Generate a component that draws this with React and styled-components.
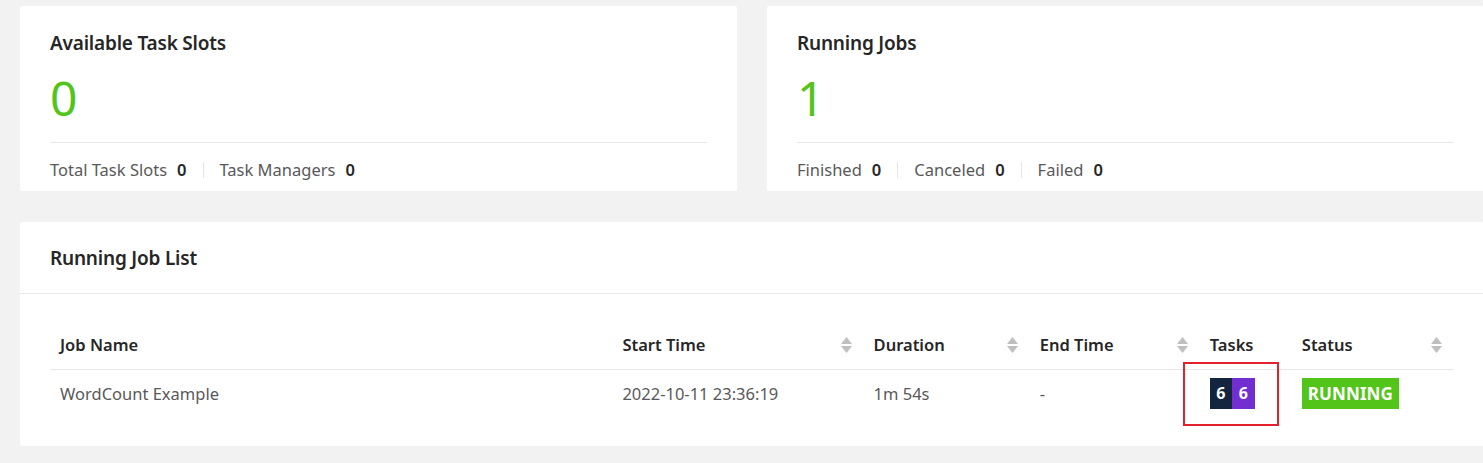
import React from 'react'
import styled, { createGlobalStyle } from 'styled-components'

const GlobalStyle = createGlobalStyle`
  html, body {
    margin: 0;
    padding: 0;
    background: #f2f2f2;
    overflow: hidden;
    font-family: 'Noto Sans', 'Open Sans', sans-serif;
    color: #333;
  }
`

const Page = styled.div`
  width: 1464px;
  padding: 6px 0 0 20px;
  display: flex;
  flex-direction: column;
  gap: 31px;
`

const TopRow = styled.div`
  display: grid;
  grid-template-columns: 717px 717px;
  gap: 30px;
`

const Card = styled.div`
  background: #fff;
  border-radius: 2px;
`

const StatBody = styled.div`
  padding: 24px 30px 0 30px;
`

const StatTitle = styled.div`
  font-size: 19px;
  font-weight: 600;
  line-height: 26px;
  color: #262626;
  letter-spacing: -0.2px;
`

const StatValue = styled.div`
  font-size: 48px;
  line-height: 60px;
  color: #52c41a;
  margin-top: 12px;
  padding-bottom: 14px;
  border-bottom: 1px solid #e8e8e8;
`

const StatFooter = styled.div`
  display: flex;
  align-items: center;
  padding: 16px 0 10px;
  line-height: 22px;
  font-size: 16.5px;
  color: #595959;
`

const FooterItem = styled.span`
  display: inline-flex;
  align-items: center;
`

const FooterValue = styled.span`
  font-weight: 600;
  color: #262626;
  margin-left: 10px;
`

const Sep = styled.span`
  width: 1px;
  height: 16px;
  background: #e4e4e4;
  margin: 0 16px;
`

const ListHeader = styled.div`
  padding: 22px 30px 21px;
  font-size: 19px;
  font-weight: 600;
  line-height: 28px;
  color: #262626;
  border-bottom: 1px solid #e8e8e8;
  letter-spacing: -0.2px;
`

const ListBody = styled.div`
  padding: 27px 30px 29px;
`

const Table = styled.table`
  width: 100%;
  border-collapse: collapse;
  table-layout: fixed;
  font-size: 16.5px;
`

const Th = styled.th`
  text-align: left;
  font-weight: 600;
  color: #262626;
  height: 48px;
  padding: 0 10px;
  border-bottom: 1px solid #e8e8e8;
  box-sizing: border-box;
`

const ThInner = styled.div`
  display: flex;
  align-items: center;
  justify-content: space-between;
`

const Td = styled.td`
  height: 48px;
  padding: 0 10px;
  color: #595959;
  box-sizing: border-box;
`

const Sorter = styled.span`
  display: inline-flex;
  flex-direction: column;
  gap: 2px;
  margin-right: 2px;
  color: #bfbfbf;
`

const TaskWrap = styled.div`
  position: relative;
  display: inline-flex;
`

const TaskBadge = styled.span`
  display: inline-flex;
  align-items: center;
  justify-content: center;
  width: ${p => p.w}px;
  height: 31px;
  background: ${p => p.bg};
  color: #fff;
  font-weight: 700;
  font-size: 16px;
`

const Highlight = styled.div`
  position: absolute;
  left: -27px;
  top: -16px;
  width: 96px;
  height: 64px;
  border: 2px solid #e3202c;
  box-sizing: border-box;
  pointer-events: none;
`

const StatusTag = styled.span`
  display: inline-flex;
  align-items: center;
  height: 31px;
  padding: 0 6px;
  background: #52c41a;
  color: #fff;
  font-weight: 700;
  font-size: 17px;
  letter-spacing: 0.1px;
`

const SortIcon = () => (
  <Sorter>
    <svg width="11" height="7" viewBox="0 0 11 7">
      <path d="M5.5 0 L11 7 L0 7 Z" fill="currentColor" />
    </svg>
    <svg width="11" height="7" viewBox="0 0 11 7">
      <path d="M0 0 L11 0 L5.5 7 Z" fill="currentColor" />
    </svg>
  </Sorter>
)

const StatCard = ({ title, value, items }) => (
  <Card>
    <StatBody>
      <StatTitle>{title}</StatTitle>
      <StatValue>{value}</StatValue>
      <StatFooter>
        {items.map((it, i) => (
          <React.Fragment key={it.label}>
            {i > 0 && <Sep />}
            <FooterItem>
              {it.label}
              <FooterValue>{it.value}</FooterValue>
            </FooterItem>
          </React.Fragment>
        ))}
      </StatFooter>
    </StatBody>
  </Card>
)

const columns = [
  { title: 'Job Name', width: 562 },
  { title: 'Start Time', width: 251, sort: true },
  { title: 'Duration', width: 166, sort: true },
  { title: 'End Time', width: 170, sort: true },
  { title: 'Tasks', width: 92 },
  { title: 'Status', width: 162, sort: true },
]

const App = () => (
  <>
    <GlobalStyle />
    <Page>
      <TopRow>
        <StatCard
          title="Available Task Slots"
          value="0"
          items={[
            { label: 'Total Task Slots', value: 0 },
            { label: 'Task Managers', value: 0 },
          ]}
        />
        <StatCard
          title="Running Jobs"
          value="1"
          items={[
            { label: 'Finished', value: 0 },
            { label: 'Canceled', value: 0 },
            { label: 'Failed', value: 0 },
          ]}
        />
      </TopRow>
      <Card>
        <ListHeader>Running Job List</ListHeader>
        <ListBody>
          <Table>
            <colgroup>
              {columns.map(c => (
                <col key={c.title} style={{ width: c.width }} />
              ))}
            </colgroup>
            <thead>
              <tr>
                {columns.map(c => (
                  <Th key={c.title}>
                    <ThInner>
                      {c.title}
                      {c.sort && <SortIcon />}
                    </ThInner>
                  </Th>
                ))}
              </tr>
            </thead>
            <tbody>
              <tr>
                <Td>WordCount Example</Td>
                <Td>2022-10-11 23:36:19</Td>
                <Td>1m 54s</Td>
                <Td>-</Td>
                <Td>
                  <TaskWrap>
                    <TaskBadge bg="#13253f" w={22}>6</TaskBadge>
                    <TaskBadge bg="#722ed1" w={23}>6</TaskBadge>
                    <Highlight />
                  </TaskWrap>
                </Td>
                <Td>
                  <StatusTag>RUNNING</StatusTag>
                </Td>
              </tr>
            </tbody>
          </Table>
        </ListBody>
      </Card>
    </Page>
  </>
)

export default App
